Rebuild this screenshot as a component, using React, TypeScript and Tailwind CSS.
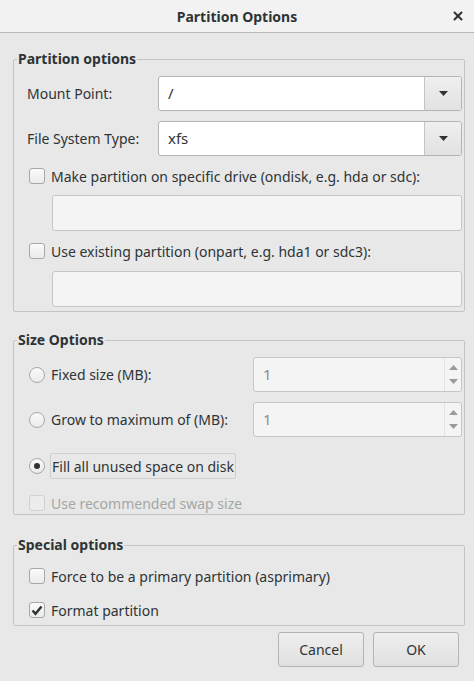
import { X } from 'lucide-react';

const font = { fontFamily: '"Noto Sans", "DejaVu Sans", sans-serif' };

function Arrow({ up = false, className = '' }: { up?: boolean; className?: string }) {
  return (
    <svg width="9" height="5" viewBox="0 0 9 5" className={className}>
      {up ? <path d="M0 5 L4.5 0 L9 5 Z" fill="currentColor" /> : <path d="M0 0 L9 0 L4.5 5 Z" fill="currentColor" />}
    </svg>
  );
}

function Check({ checked = false, disabled = false }: { checked?: boolean; disabled?: boolean }) {
  return (
    <span
      className={`flex h-[16px] w-[16px] shrink-0 items-center justify-center rounded-[3px] border ${
        disabled ? 'border-[#d0d0d0] bg-[#ececec]' : 'border-[#a8a8a8] bg-gradient-to-b from-[#fafafa] to-[#ebebeb]'
      }`}
    >
      {checked && (
        <svg width="12" height="11" viewBox="0 0 12 11">
          <path d="M1.5 5.5 L4.5 8.8 L10.5 1.5" fill="none" stroke="#2e3436" strokeWidth="2.4" />
        </svg>
      )}
    </span>
  );
}

function Radio({ checked = false }: { checked?: boolean }) {
  return (
    <span className="flex h-[16px] w-[16px] shrink-0 items-center justify-center rounded-full border border-[#a8a8a8] bg-gradient-to-b from-[#fafafa] to-[#ebebeb]">
      {checked && <span className="h-[6px] w-[6px] rounded-full bg-[#2e3436]" />}
    </span>
  );
}

function Combo({ value }: { value: string }) {
  return (
    <div className="mr-[2px] flex h-[35px] flex-1 rounded-[3px] border border-[#b4b4b4] bg-white">
      <div className="flex flex-1 items-center pl-[9px] text-[15px] text-[#2e3436]">{value}</div>
      <div className="flex w-[37px] items-center justify-center rounded-r-[3px] border-l border-[#c4c4c4] bg-gradient-to-b from-[#efefef] to-[#e2e2e2] text-[#2e3436]">
        <Arrow />
      </div>
    </div>
  );
}

function Spin() {
  return (
    <div className="mr-[2px] flex h-[35px] w-[209px] rounded-[3px] border border-[#c6c6c6] bg-[#f4f4f4]">
      <div className="flex flex-1 items-center pl-[9px] text-[15px] text-[#8b8e8f]">1</div>
      <div className="flex w-[17px] flex-col items-center justify-around border-l border-[#e2e2e2] py-[3px] text-[#9a9c9c]">
        <Arrow up />
        <Arrow />
      </div>
    </div>
  );
}

function Legend({ children }: { children: string }) {
  return <legend className="ml-[3px] px-[1px] font-bold leading-[20px] text-[#2e3436]">{children}</legend>;
}

export default function App() {
  return (
    <div className="flex h-[681px] w-[474px] flex-col bg-[#e8e8e8] text-[14px] text-[#2e3436]" style={font}>
      {/* Title bar */}
      <div className="relative flex h-[33px] shrink-0 items-center justify-center border-b border-[#b9b9b9] bg-[#f2f2f2]">
        <span className="font-bold">Partition Options</span>
        <X size={14} strokeWidth={3.5} className="absolute right-[9px] top-[9px] text-[#2e3436]" />
      </div>

      <div className="flex flex-1 flex-col pl-[13px] pr-[9px]">
        {/* Partition options */}
        <fieldset className="mt-[16px] rounded-[2px] border border-[#c4c4c4] p-0 pb-[3px]">
          <Legend>Partition options</Legend>
          <div className="mt-[7px] flex items-center">
            <span className="w-[144px] pl-[13px]">Mount Point:</span>
            <Combo value="/" />
          </div>
          <div className="mt-[10px] flex items-center">
            <span className="w-[144px] pl-[13px]">File System Type:</span>
            <Combo value="xfs" />
          </div>
          <div className="mt-[7px] flex h-[26px] items-center gap-[6px] pl-[15px]">
            <Check />
            <span>Make partition on specific drive (ondisk, e.g. hda or sdc):</span>
          </div>
          <div className="mr-[2px] ml-[38px] mt-[6px] h-[36px] rounded-[3px] border border-[#c6c6c6] bg-[#f4f4f4]" />
          <div className="mt-[7px] flex h-[26px] items-center gap-[6px] pl-[15px]">
            <Check />
            <span>Use existing partition (onpart, e.g. hda1 or sdc3):</span>
          </div>
          <div className="mr-[2px] ml-[38px] mt-[7px] mb-[1px] h-[36px] rounded-[3px] border border-[#c6c6c6] bg-[#f4f4f4]" />
        </fieldset>

        {/* Size options */}
        <fieldset className="mt-[18px] rounded-[2px] border border-[#c4c4c4] p-0">
          <Legend>Size Options</Legend>
          <div className="mt-[7px] flex items-center justify-between">
            <div className="flex items-center gap-[6px] pl-[15px]">
              <Radio />
              <span>Fixed size (MB):</span>
            </div>
            <Spin />
          </div>
          <div className="mt-[10px] flex items-center justify-between">
            <div className="flex items-center gap-[6px] pl-[15px]">
              <Radio />
              <span>Grow to maximum of (MB):</span>
            </div>
            <Spin />
          </div>
          <div className="mt-[16px] flex items-center gap-[5px] pl-[15px]">
            <Radio checked />
            <span className="flex h-[26px] items-center rounded-[2px] border border-[#d0d0d0] px-[1px]">
              Fill all unused space on disk
            </span>
          </div>
          <div className="mt-[13px] flex h-[22px] items-center gap-[6px] pl-[15px] text-[#a4a6a6]">
            <Check disabled />
            <span>Use recommended swap size</span>
          </div>
        </fieldset>

        {/* Special options */}
        <fieldset className="mt-[20px] rounded-[2px] border border-[#c4c4c4] p-0 pb-[2px]">
          <Legend>Special options</Legend>
          <div className="mt-[8px] flex h-[26px] items-center gap-[6px] pl-[15px]">
            <Check />
            <span>Force to be a primary partition (asprimary)</span>
          </div>
          <div className="mt-[8px] flex h-[26px] items-center gap-[6px] pl-[15px]">
            <Check checked />
            <span>Format partition</span>
          </div>
        </fieldset>

        <div className="mt-[6px] flex justify-end gap-[9px] pr-[6px]">
          <button className="h-[35px] w-[86px] rounded-[3px] border border-[#b4b4b4] bg-gradient-to-b from-[#efefef] to-[#e0e0e0]">
            Cancel
          </button>
          <button className="h-[35px] w-[86px] rounded-[3px] border border-[#b4b4b4] bg-gradient-to-b from-[#efefef] to-[#e0e0e0]">
            OK
          </button>
        </div>
      </div>
    </div>
  );
}
